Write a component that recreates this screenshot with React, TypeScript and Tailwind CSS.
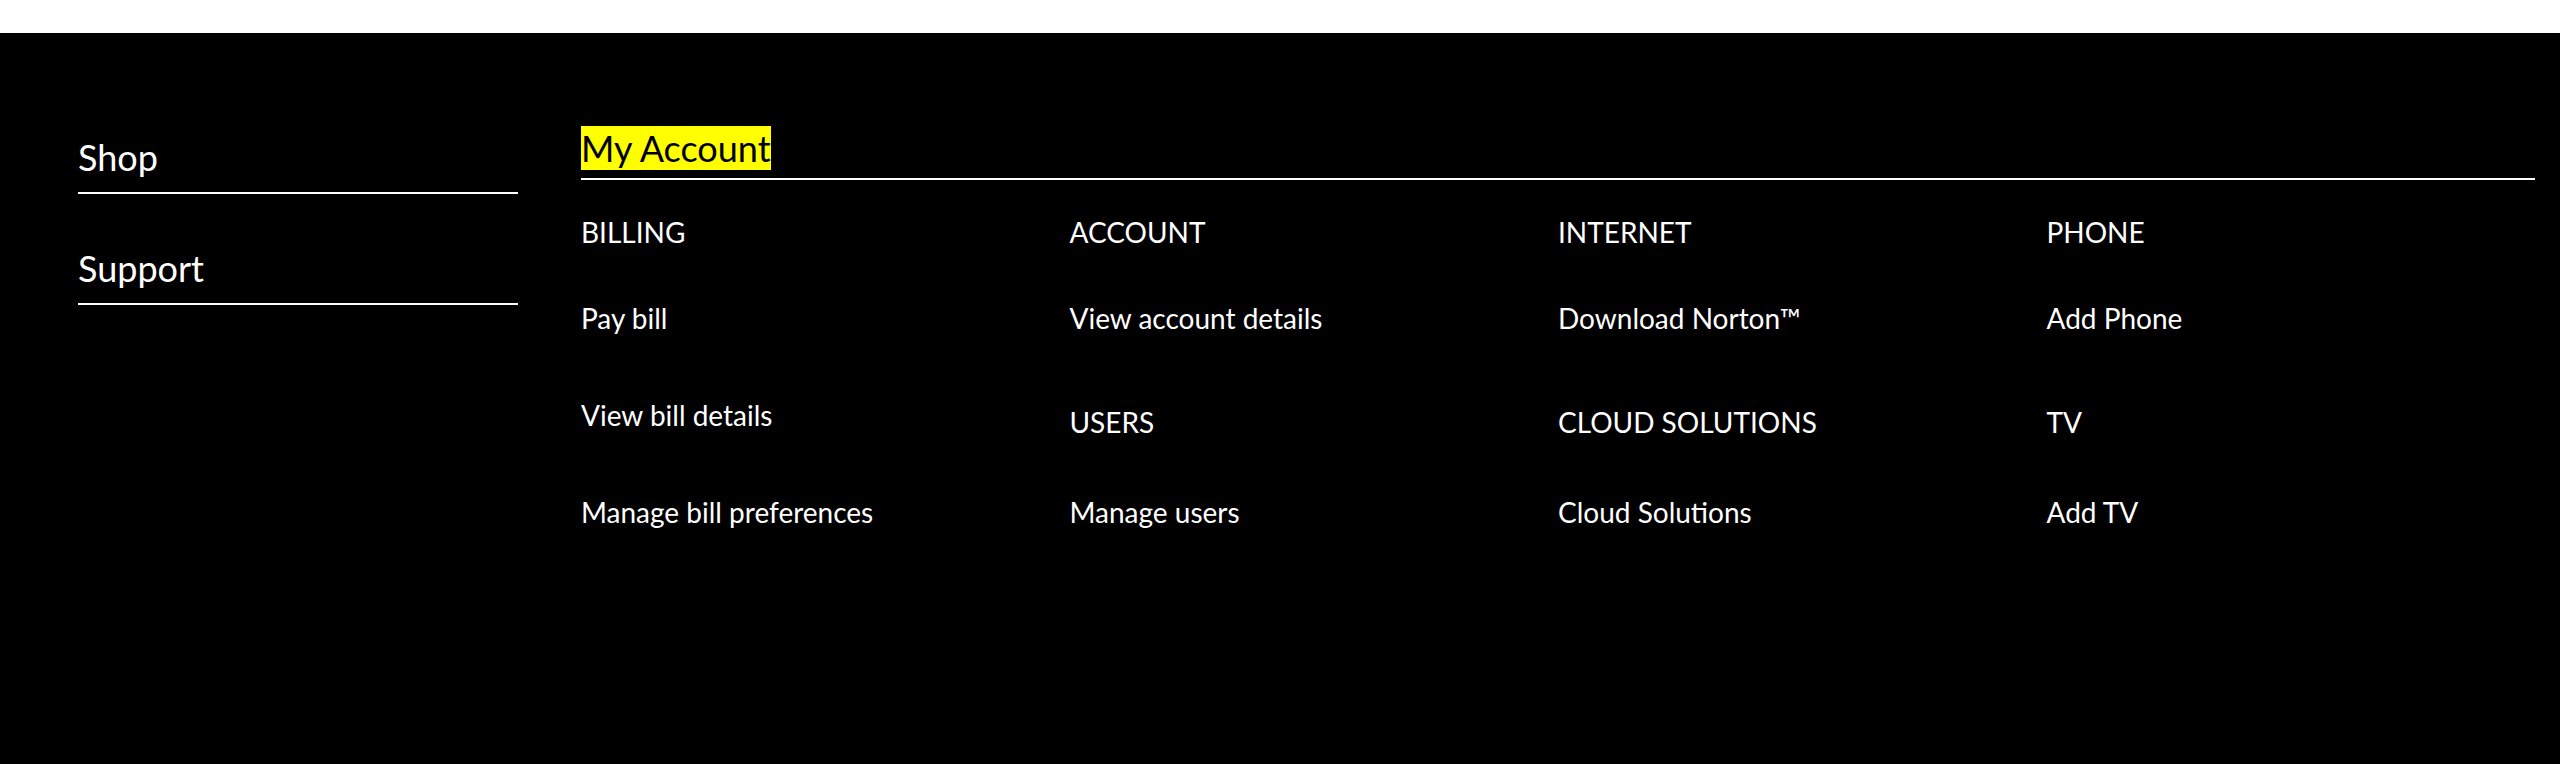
const sideLinks = ["Shop", "Support"];

type Group = { title: string; links: string[] };

const columns: Group[][] = [
  [{ title: "BILLING", links: ["Pay bill", "View bill details", "Manage bill preferences"] }],
  [
    { title: "ACCOUNT", links: ["View account details"] },
    { title: "USERS", links: ["Manage users"] },
  ],
  [
    { title: "INTERNET", links: ["Download Norton™"] },
    { title: "CLOUD SOLUTIONS", links: ["Cloud Solutions"] },
  ],
  [
    { title: "PHONE", links: ["Add Phone"] },
    { title: "TV", links: ["Add TV"] },
  ],
];

function MenuGroup({ group, first }: { group: Group; first: boolean }) {
  return (
    <div className="flex flex-col">
      <h3
        className={`${first ? "mb-[54px]" : "mb-[58px]"} text-[28px] leading-[32px] font-normal text-white`}
      >
        {group.title}
      </h3>
      <ul className="flex flex-col gap-[64px]">
        {group.links.map((link) => (
          <li key={link}>
            <a href="#" className="text-[28px] leading-[32px] text-white">
              {link}
            </a>
          </li>
        ))}
      </ul>
    </div>
  );
}

export default function App() {
  return (
    <div className="font-['Lato',sans-serif]">
      <div className="h-[33px] bg-white" />
      <footer className="flex min-h-[731px] gap-[63px] bg-black pt-[93px] pr-[25px] pl-[78px]">
        <nav className="w-[440px] shrink-0 pt-[9px]">
          <ul className="flex flex-col gap-[52px]">
            {sideLinks.map((label) => (
              <li key={label} className="border-b-2 border-white pb-[13px]">
                <a href="#" className="block text-[36px] leading-[44px] text-white">
                  {label}
                </a>
              </li>
            ))}
          </ul>
        </nav>

        <div className="flex-1">
          <h2 className="border-b-2 border-white pb-2 text-[36px] leading-[44px] font-normal">
            <span className="bg-[#ffff00] text-black">My Account</span>
          </h2>
          <div className="mt-[36px] grid grid-cols-4">
            {columns.map((groups, i) => (
              <div key={i} className="flex flex-col gap-[71px]">
                {groups.map((g, j) => (
                  <MenuGroup key={g.title} group={g} first={j === 0} />
                ))}
              </div>
            ))}
          </div>
        </div>
      </footer>
    </div>
  );
}
